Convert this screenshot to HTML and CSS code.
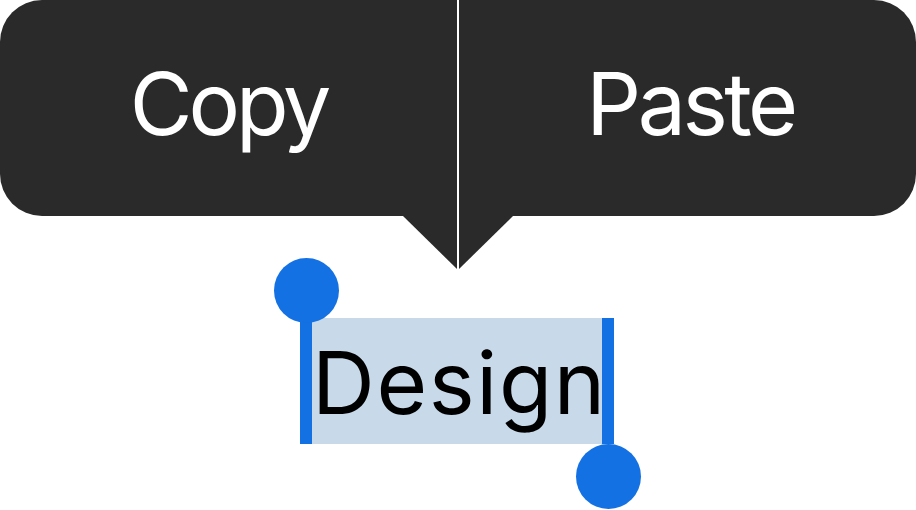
FILE: index.html
```html
<!DOCTYPE html>
<html lang="en">
<head>
<meta charset="utf-8">
<title>Edit menu</title>
<link rel="stylesheet" href="styles.css">
</head>
<body>
<div class="callout">
  <div class="menu">
    <div class="menu-item">Copy</div>
    <div class="menu-divider"></div>
    <div class="menu-item menu-item-paste">Paste</div>
  </div>
  <svg class="arrow" width="110" height="54" viewBox="0 0 110 54">
    <polygon points="0,0 110,0 55,54" fill="#2a2a2a"/>
    <rect x="54" y="0" width="2" height="54" fill="#ffffff"/>
  </svg>
</div>
<div class="text-area">
  <div class="selection">
    <div class="bar bar-start"><span class="knob knob-top"></span></div>
    <span class="selected-text">Design</span>
    <div class="bar bar-end"><span class="knob knob-bottom"></span></div>
  </div>
</div>
</body>
</html>
```
FILE: styles.css
```css
html, body {
  margin: 0;
  padding: 0;
  background: #ffffff;
}
body {
  width: 916px;
  height: 510px;
  overflow: hidden;
  font-family: Inter, "Noto Sans", "Liberation Sans", sans-serif;
}
.callout {
  display: flex;
  flex-direction: column;
  align-items: center;
}
.menu {
  display: flex;
  width: 100%;
  height: 216px;
  background: #2a2a2a;
  border-radius: 42px;
  color: #ffffff;
}
.menu-item {
  flex: none;
  box-sizing: border-box;
  width: 457px;
  display: flex;
  align-items: center;
  justify-content: center;
  font-size: 86px;
  letter-spacing: -4px;
  padding-bottom: 8px;
}
.menu-item-paste {
  letter-spacing: -3.5px;
  padding-left: 6px;
}
.menu-divider {
  flex: none;
  width: 2px;
  background: #ffffff;
}
.arrow {
  display: block;
}
.text-area {
  display: flex;
  justify-content: flex-start;
  padding: 48px 0 0 300px;
}
.selection {
  display: flex;
  height: 126px;
}
.bar {
  position: relative;
  width: 12px;
  background: #1471e3;
}
.knob {
  position: absolute;
  left: -26.5px;
  width: 65px;
  height: 65px;
  border-radius: 50%;
  background: #1471e3;
}
.knob-top {
  top: -60px;
}
.knob-bottom {
  bottom: -65px;
}
.selected-text {
  display: block;
  background: #c8daea;
  color: #000000;
  font-size: 87px;
  line-height: 126px;
  letter-spacing: 1.6px;
  padding: 2px 0 0 0;
  height: 124px;
  width: 290px;
  white-space: nowrap;
}
```
